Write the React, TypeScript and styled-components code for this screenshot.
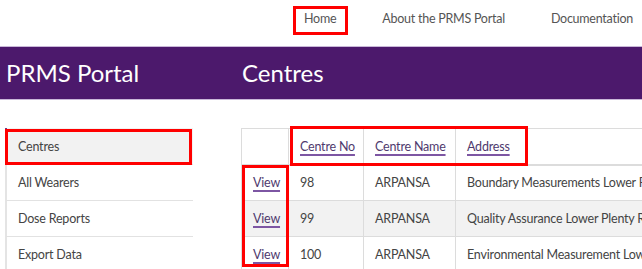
import React from 'react'
import styled, { createGlobalStyle } from 'styled-components'

// ─── Global ───────────────────────────────────────────────────────────────────

const GlobalStyle = createGlobalStyle`
  html, body { margin: 0; padding: 0; background: #fff; overflow: hidden; }
  body { font-family: Lato, "Open Sans", "Liberation Sans", sans-serif; color: #444; }
  * { box-sizing: border-box; }
`

// ─── Styled components ────────────────────────────────────────────────────────

const Page = styled.div`position: relative; width: 642px; height: 269px; overflow: hidden;`

const TopNav = styled.nav`
  height: 46px; display: flex; justify-content: flex-end; align-items: center;
  padding-right: 9px; gap: 46px; padding-bottom: 10px;
`

const NavLink = styled.a`
  font-size: 12.5px; letter-spacing: -0.25px; color: #555; text-decoration: none;
`

const Band = styled.header`
  height: 54px; background: #4c196c;
  border-top: 1px solid #c9b8d8; border-bottom: 1px solid #c9b8d8;
  display: grid; grid-template-columns: 188px 1fr; column-gap: 48px;
  align-items: center; padding-left: 6px; padding-bottom: 1px;
`

const BandTitle = styled.h1`
  margin: 0; font-size: 24px; font-weight: 400; color: #fff; white-space: nowrap;
`

const Content = styled.div`
  display: grid; grid-template-columns: 188px 1fr; column-gap: 48px;
  padding: 28px 0 0 5px;
`

const SideNav = styled.ul`list-style: none; margin: 0; padding: 0;`

const SideItem = styled.li<{ $active?: boolean }>`
  height: 36px; display: flex; align-items: center; padding-left: 11px;
  font-size: 12.5px; letter-spacing: -0.2px; color: #444;
  border-left: 2px solid ${({ $active }) => ($active ? '#6b3f8e' : '#e4e4e4')};
  background: ${({ $active }) => ($active ? '#f2f2f2' : '#fff')};
  & + & { border-top: 1px solid #e2e2e2; }
`

const Main = styled.main`overflow: hidden; min-width: 0;`

const Table = styled.table`
  border-collapse: collapse; table-layout: fixed; width: 720px;
  font-size: 12.5px; letter-spacing: -0.2px; color: #444; white-space: nowrap;
`

const Col = styled.col<{ $w?: number }>`
  ${({ $w }) => ($w ? `width: ${$w}px;` : '')}
`

const Th = styled.th`
  height: 36px; padding: 0 11px; text-align: left; font-weight: 400;
  border: 1px solid #dcdcdc; border-bottom-width: 2px; overflow: visible;
`

const Row = styled.tr<{ $alt?: boolean }>`
  background: ${({ $alt }) => ($alt ? '#f2f2f2' : '#fff')};
`

const Td = styled.td`height: 36px; padding: 0 11px; border: 1px solid #dcdcdc;`

const SortLink = styled.a`
  color: #4f3a6e; text-decoration: underline; text-decoration-color: #7d56a3;
  text-decoration-thickness: 2px; text-underline-offset: 3px;
`

const Highlight = styled.div<{ $x: number; $y: number; $w: number; $h: number }>`
  position: absolute; pointer-events: none; border: 3px solid #f00;
  left: ${({ $x }) => $x}px; top: ${({ $y }) => $y}px;
  width: ${({ $w }) => $w}px; height: ${({ $h }) => $h}px;
`

// ─── Data ─────────────────────────────────────────────────────────────────────

const sideItems = ['Centres', 'All Wearers', 'Dose Reports', 'Export Data']

const centres = [
  { no: 98, name: 'ARPANSA', address: 'Boundary Measurements Lower Plenty Road, Yallambie VIC 3085' },
  { no: 99, name: 'ARPANSA', address: 'Quality Assurance Lower Plenty Road, Yallambie VIC 3085' },
  { no: 100, name: 'ARPANSA', address: 'Environmental Measurement Lower Plenty Road, Yallambie VIC 3085' },
]

// ─── Component ────────────────────────────────────────────────────────────────

export default function App() {
  return (
    <Page>
      <GlobalStyle />
      <TopNav>
        <NavLink href="#">Home</NavLink>
        <NavLink href="#">About the PRMS Portal</NavLink>
        <NavLink href="#">Documentation</NavLink>
      </TopNav>

      <Band>
        <BandTitle>PRMS Portal</BandTitle>
        <BandTitle>Centres</BandTitle>
      </Band>

      <Content>
        <SideNav>
          {sideItems.map((item, i) => (
            <SideItem key={item} $active={i === 0}>{item}</SideItem>
          ))}
        </SideNav>

        <Main>
          <Table>
            <colgroup>
              <Col $w={47} />
              <Col $w={75} />
              <Col $w={92} />
              <Col />
            </colgroup>
            <thead>
              <tr>
                <Th />
                <Th><SortLink href="#">Centre No</SortLink></Th>
                <Th><SortLink href="#">Centre Name</SortLink></Th>
                <Th><SortLink href="#">Address</SortLink></Th>
              </tr>
            </thead>
            <tbody>
              {centres.map((c, i) => (
                <Row key={c.no} $alt={i % 2 === 1}>
                  <Td><SortLink href="#">View</SortLink></Td>
                  <Td>{c.no}</Td>
                  <Td>{c.name}</Td>
                  <Td>{c.address}</Td>
                </Row>
              ))}
            </tbody>
          </Table>
        </Main>
      </Content>

      <Highlight $x={293} $y={6} $w={55} $h={29} />
      <Highlight $x={5} $y={129} $w={187} $h={36} />
      <Highlight $x={290} $y={126} $w={238} $h={40} />
      <Highlight $x={242} $y={165} $w={47} $h={102} />
    </Page>
  )
}
